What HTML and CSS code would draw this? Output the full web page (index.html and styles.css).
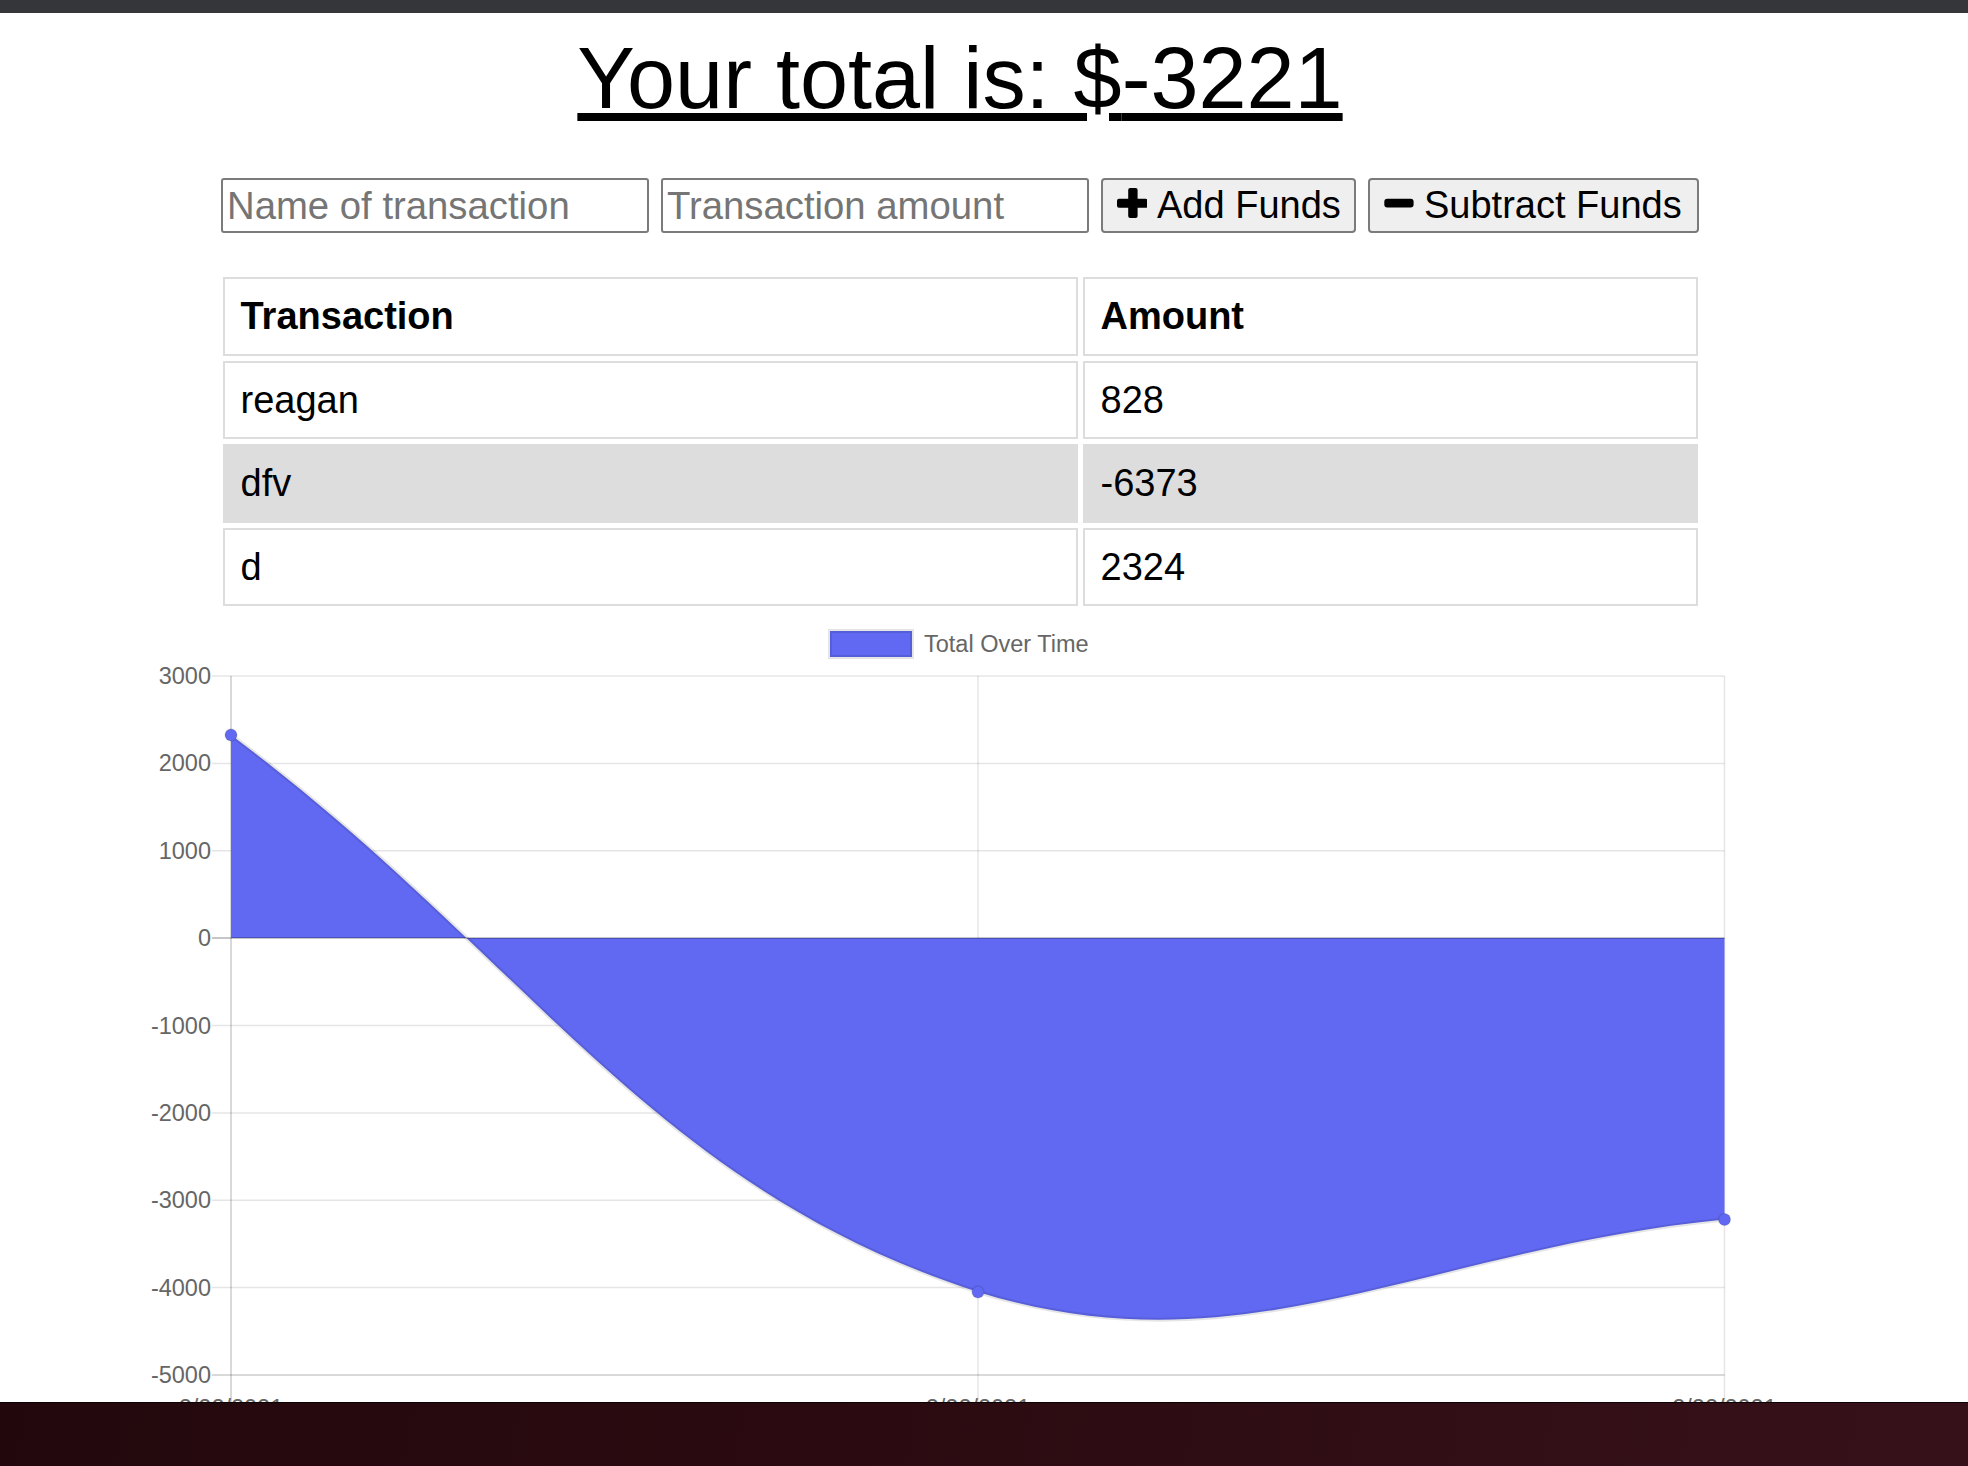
FILE: index.html
```html
<!DOCTYPE html>
<html lang="en">
<head>
<meta charset="utf-8">
<title>Budget Tracker</title>
<link rel="stylesheet" href="styles.css">
</head>
<body>
<div class="topbar"></div>
<main class="page">
  <h1 class="total">Your total is: $<span class="amount">-3221</span></h1>
  <form class="entry">
    <input class="field" type="text" placeholder="Name of transaction">
    <input class="field" type="number" placeholder="Transaction amount">
    <button class="btn btn-add" type="button">
      <svg class="icon" viewBox="0 0 30 30" width="30" height="30" aria-hidden="true">
        <rect x="11.2" y="0" width="9.4" height="30" rx="2"/>
        <rect x="0" y="10.8" width="30.6" height="9" rx="2"/>
      </svg>
      <span>Add Funds</span>
    </button>
    <button class="btn btn-sub" type="button">
      <svg class="icon" viewBox="0 0 30 30" width="30" height="30" aria-hidden="true">
        <rect x="0.3" y="10.8" width="29.3" height="8.6" rx="3"/>
      </svg>
      <span>Subtract Funds</span>
    </button>
  </form>
  <table class="ledger">
    <colgroup><col class="col-name"><col class="col-amount"></colgroup>
    <thead>
      <tr><th>Transaction</th><th>Amount</th></tr>
    </thead>
    <tbody>
      <tr><td>reagan</td><td>828</td></tr>
      <tr><td>dfv</td><td>-6373</td></tr>
      <tr><td>d</td><td>2324</td></tr>
    </tbody>
  </table>
  <svg class="chart" viewBox="0 611 1920 791" width="1920" height="791" aria-label="Total Over Time chart">
    <g class="legend">
      <rect x="830" y="631" width="82" height="26" fill="#6169f2" stroke="rgba(0,0,0,0.1)" stroke-width="4"/>
      <text x="924" y="652" class="label">Total Over Time</text>
    </g>
    <g class="grid" stroke="rgba(0,0,0,0.1)" stroke-width="1.5">
      <line x1="212" y1="676" x2="1724.5" y2="676"/>
      <line x1="212" y1="763.4" x2="1724.5" y2="763.4"/>
      <line x1="212" y1="850.75" x2="1724.5" y2="850.75"/>
      <line x1="212" y1="1025.5" x2="1724.5" y2="1025.5"/>
      <line x1="212" y1="1112.9" x2="1724.5" y2="1112.9"/>
      <line x1="212" y1="1200.25" x2="1724.5" y2="1200.25"/>
      <line x1="212" y1="1287.6" x2="1724.5" y2="1287.6"/>
      <line x1="978" y1="676" x2="978" y2="1402"/>
      <line x1="1724.5" y1="676" x2="1724.5" y2="1402"/>
    </g>
    <g class="axis" stroke="rgba(0,0,0,0.2)" stroke-width="1.5">
      <line x1="212" y1="1375" x2="1724.5" y2="1375"/>
      <line x1="231" y1="676" x2="231" y2="1402"/>
    </g>
    <path class="area" d="M231,938.1 L231,735 C529.8,957.8 647,1184.6 978,1292 C1244.4,1375 1425.9,1248.5 1724.5,1219.5 L1724.5,938.1 Z" fill="#6169f2"/>
    <line x1="212" y1="938.1" x2="1724.5" y2="938.1" stroke="rgba(0,0,0,0.3)" stroke-width="1.5"/>
    <path d="M231,735 C529.8,957.8 647,1184.6 978,1292 C1244.4,1375 1425.9,1248.5 1724.5,1219.5" fill="none" stroke="rgba(0,0,0,0.1)" stroke-width="4"/>
    <g class="points" fill="#6169f2" stroke="rgba(0,0,0,0.1)" stroke-width="1.5">
      <circle cx="231" cy="735" r="6"/>
      <circle cx="978" cy="1292" r="6"/>
      <circle cx="1724.5" cy="1219.5" r="6"/>
    </g>
    <g class="ticks label" text-anchor="end">
      <text x="211" y="684">3000</text>
      <text x="211" y="771.4">2000</text>
      <text x="211" y="858.75">1000</text>
      <text x="211" y="946.1">0</text>
      <text x="211" y="1033.5">-1000</text>
      <text x="211" y="1120.9">-2000</text>
      <text x="211" y="1208.25">-3000</text>
      <text x="211" y="1295.6">-4000</text>
      <text x="211" y="1383">-5000</text>
    </g>
    <g class="ticks label" text-anchor="middle">
      <text x="231" y="1416">2/22/2021</text>
      <text x="978" y="1416">2/22/2021</text>
      <text x="1724.5" y="1416">2/22/2021</text>
    </g>
  </svg>
</main>
<div class="desktop"></div>
</body>
</html>
```

FILE: styles.css
```css
* {
  box-sizing: border-box;
}

html, body {
  margin: 0;
  padding: 0;
}

body {
  width: 1968px;
  height: 1466px;
  overflow: hidden;
  background: #ffffff;
  font-family: "Liberation Sans", Arial, Helvetica, sans-serif;
  color: #000;
}

.topbar {
  height: 13px;
  background: #35363a;
}

.page {
  width: 1920px;
  height: 1389px;
  overflow: hidden;
  display: flex;
  flex-direction: column;
  align-items: center;
}

.total {
  margin: 15px 0 0;
  font-size: 86.4px;
  line-height: 100px;
  font-weight: normal;
  text-decoration: underline;
  text-align: center;
}

.entry {
  margin: 50px 0 0;
  display: flex;
  gap: 12px;
  height: 55px;
}

.field {
  width: 428px;
  height: 55px;
  margin: 0;
  padding: 0 4px;
  border: 2px solid #7b7b7b;
  border-radius: 3px;
  font-family: "Liberation Sans", Arial, sans-serif;
  font-size: 38.3px;
  color: #000;
  background: #fff;
}

.field::placeholder {
  color: #757575;
}

.field::-webkit-outer-spin-button,
.field::-webkit-inner-spin-button {
  -webkit-appearance: none;
  margin: 0;
}

.btn {
  height: 55px;
  margin: 0;
  padding: 0 0 0 14px;
  display: flex;
  align-items: center;
  gap: 10px;
  border: 2px solid #7b7b7b;
  border-radius: 4px;
  background: #efefef;
  font-family: "Liberation Sans", Arial, sans-serif;
  font-size: 38px;
  color: #000;
}

.btn-add {
  width: 255px;
}

.btn-sub {
  width: 331px;
}

.icon {
  flex: none;
  margin-bottom: 6px;
  fill: #000;
}

.ledger {
  margin-top: 39px;
  width: 1485px;
  table-layout: fixed;
  border-collapse: separate;
  border-spacing: 5px;
  font-size: 38px;
}

.col-name {
  width: 855px;
}

.ledger th,
.ledger td {
  border: 2px solid #dddddd;
  padding: 16px 16px;
  line-height: 42.5px;
  text-align: left;
}

.ledger th {
  font-weight: bold;
}

.ledger tbody tr:nth-child(2) td {
  background: #dddddd;
}

.chart {
  display: block;
  flex: none;
  width: 1920px;
  height: 791px;
}

.label {
  font-family: "Liberation Sans", Arial, Helvetica, sans-serif;
  font-size: 23.5px;
  fill: #666666;
}

.desktop {
  height: 64px;
  border-top: 1px solid #0b0204;
  background: linear-gradient(100deg, #22080c 0%, #2c0b11 50%, #37111a 100%);
}
```
